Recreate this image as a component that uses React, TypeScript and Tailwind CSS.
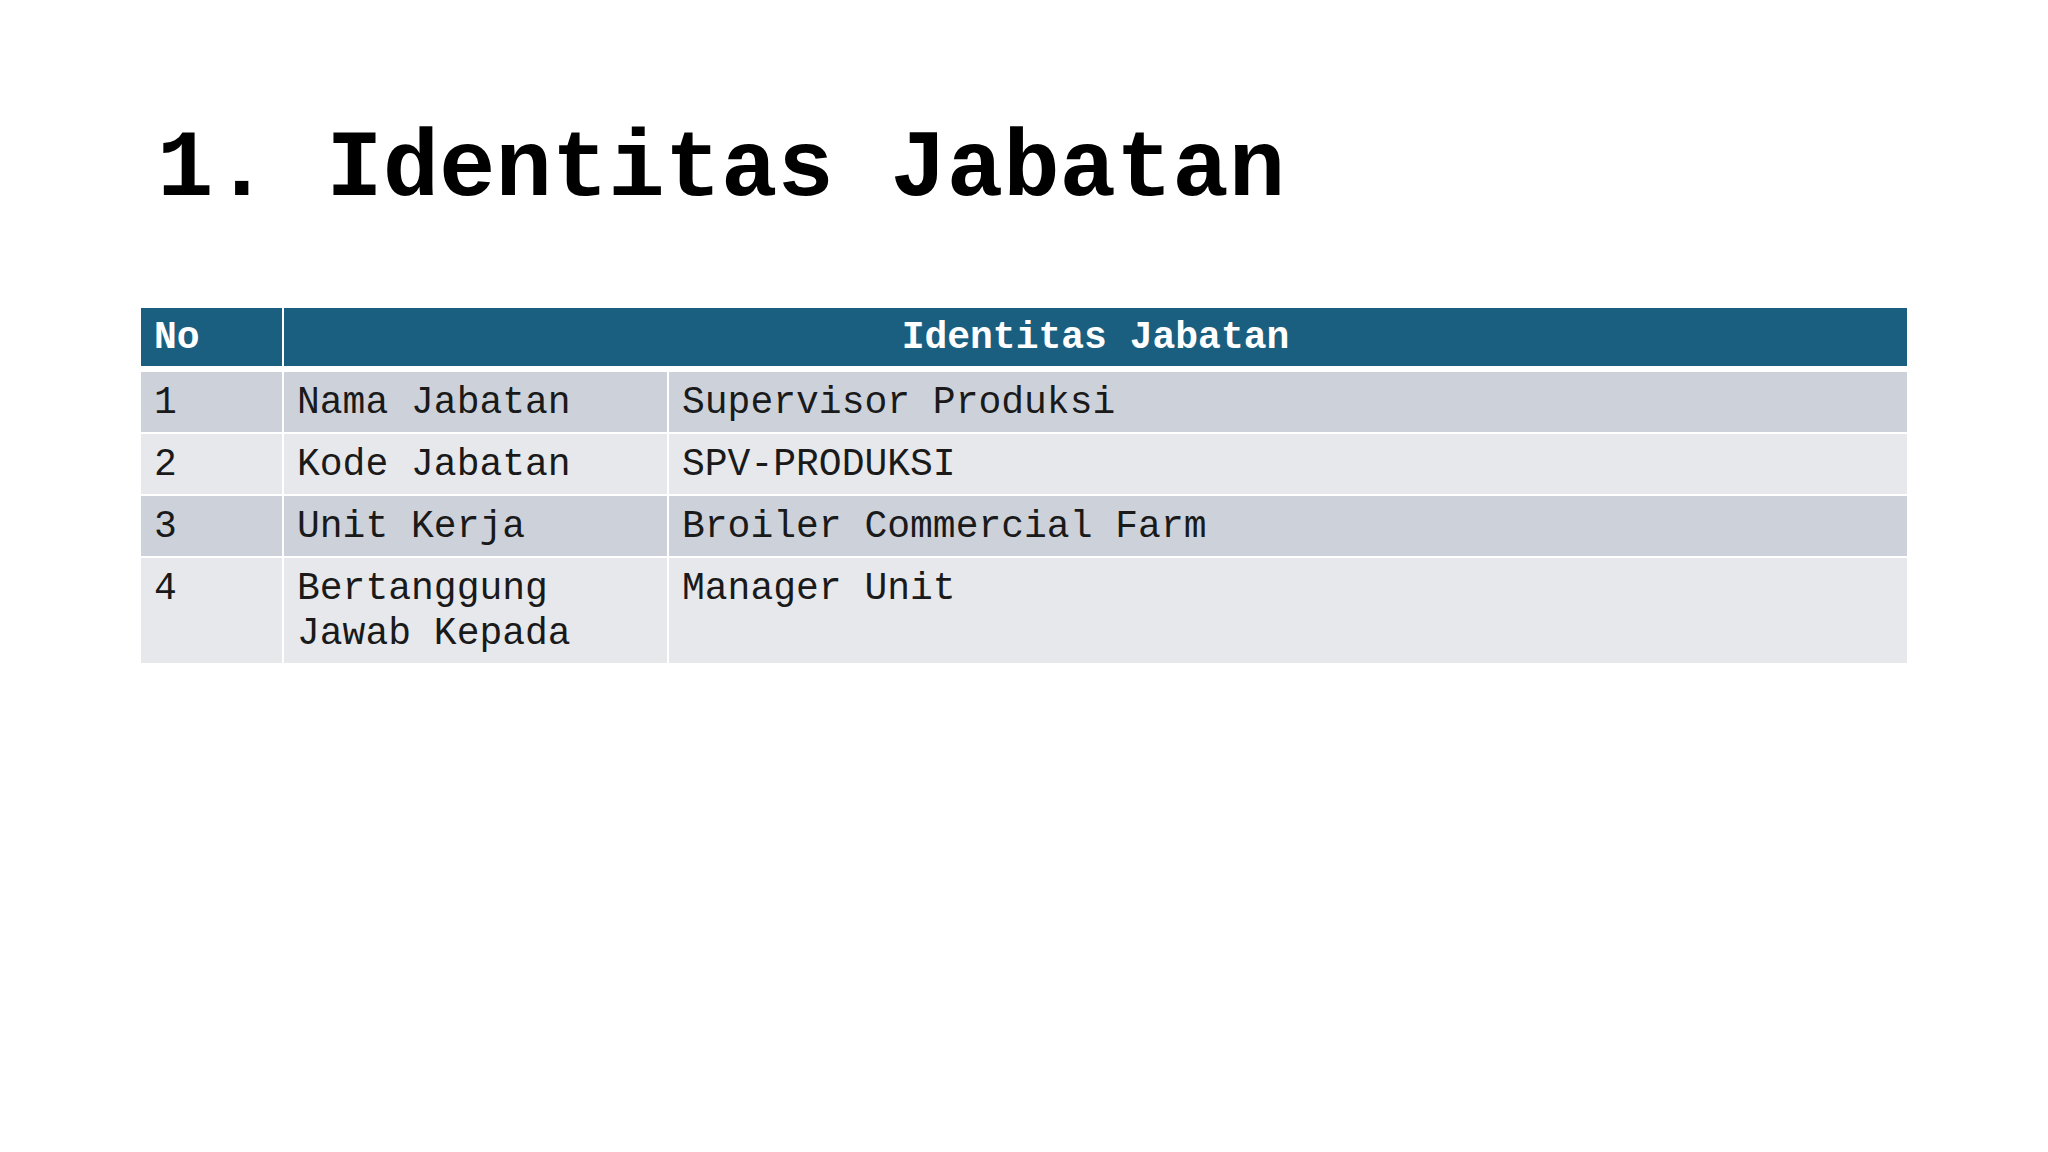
const rows = [
    { no: '1', label: 'Nama Jabatan', value: 'Supervisor Produksi' },
    { no: '2', label: 'Kode Jabatan', value: 'SPV-PRODUKSI' },
    { no: '3', label: 'Unit Kerja', value: 'Broiler Commercial Farm' },
    { no: '4', label: 'Bertanggung Jawab Kepada', value: 'Manager Unit' },
]

export default function App() {
    return (
        <div className="min-h-[1152px] w-[2048px] bg-white font-['Liberation_Mono',monospace] text-[#1a1a1a]">
            <div className="px-[141px] pt-[120px]">
                {/* Title */}
                <h1 className="pl-[16px] text-[94px] leading-[100px] font-bold text-black">1. Identitas Jabatan</h1>

                {/* Table */}
                <div className="mt-[88px] grid grid-cols-[141px_383px_1fr] gap-[2px] w-[1766px] text-[38px] leading-[45px]">
                    <div className="bg-[#1a5f80] px-[13px] pt-[7px] pb-[6px] font-bold text-white mb-[4px]">No</div>
                    <div className="col-span-2 bg-[#1a5f80] px-[13px] pt-[7px] pb-[6px] text-center font-bold text-white mb-[4px]">
                        Identitas Jabatan
                    </div>

                    {rows.map((r, i) => {
                        const bg = i % 2 === 0 ? 'bg-[#cdd2da]' : 'bg-[#e7e8eb]'
                        return (
                            <div key={r.no} className="contents">
                                <div className={`${bg} px-[13px] pt-[8px] pb-[7px]`}>{r.no}</div>
                                <div className={`${bg} px-[13px] pt-[8px] pb-[7px] pr-[60px]`}>{r.label}</div>
                                <div className={`${bg} px-[13px] pt-[8px] pb-[7px]`}>{r.value}</div>
                            </div>
                        )
                    })}
                </div>
            </div>
        </div>
    )
}
